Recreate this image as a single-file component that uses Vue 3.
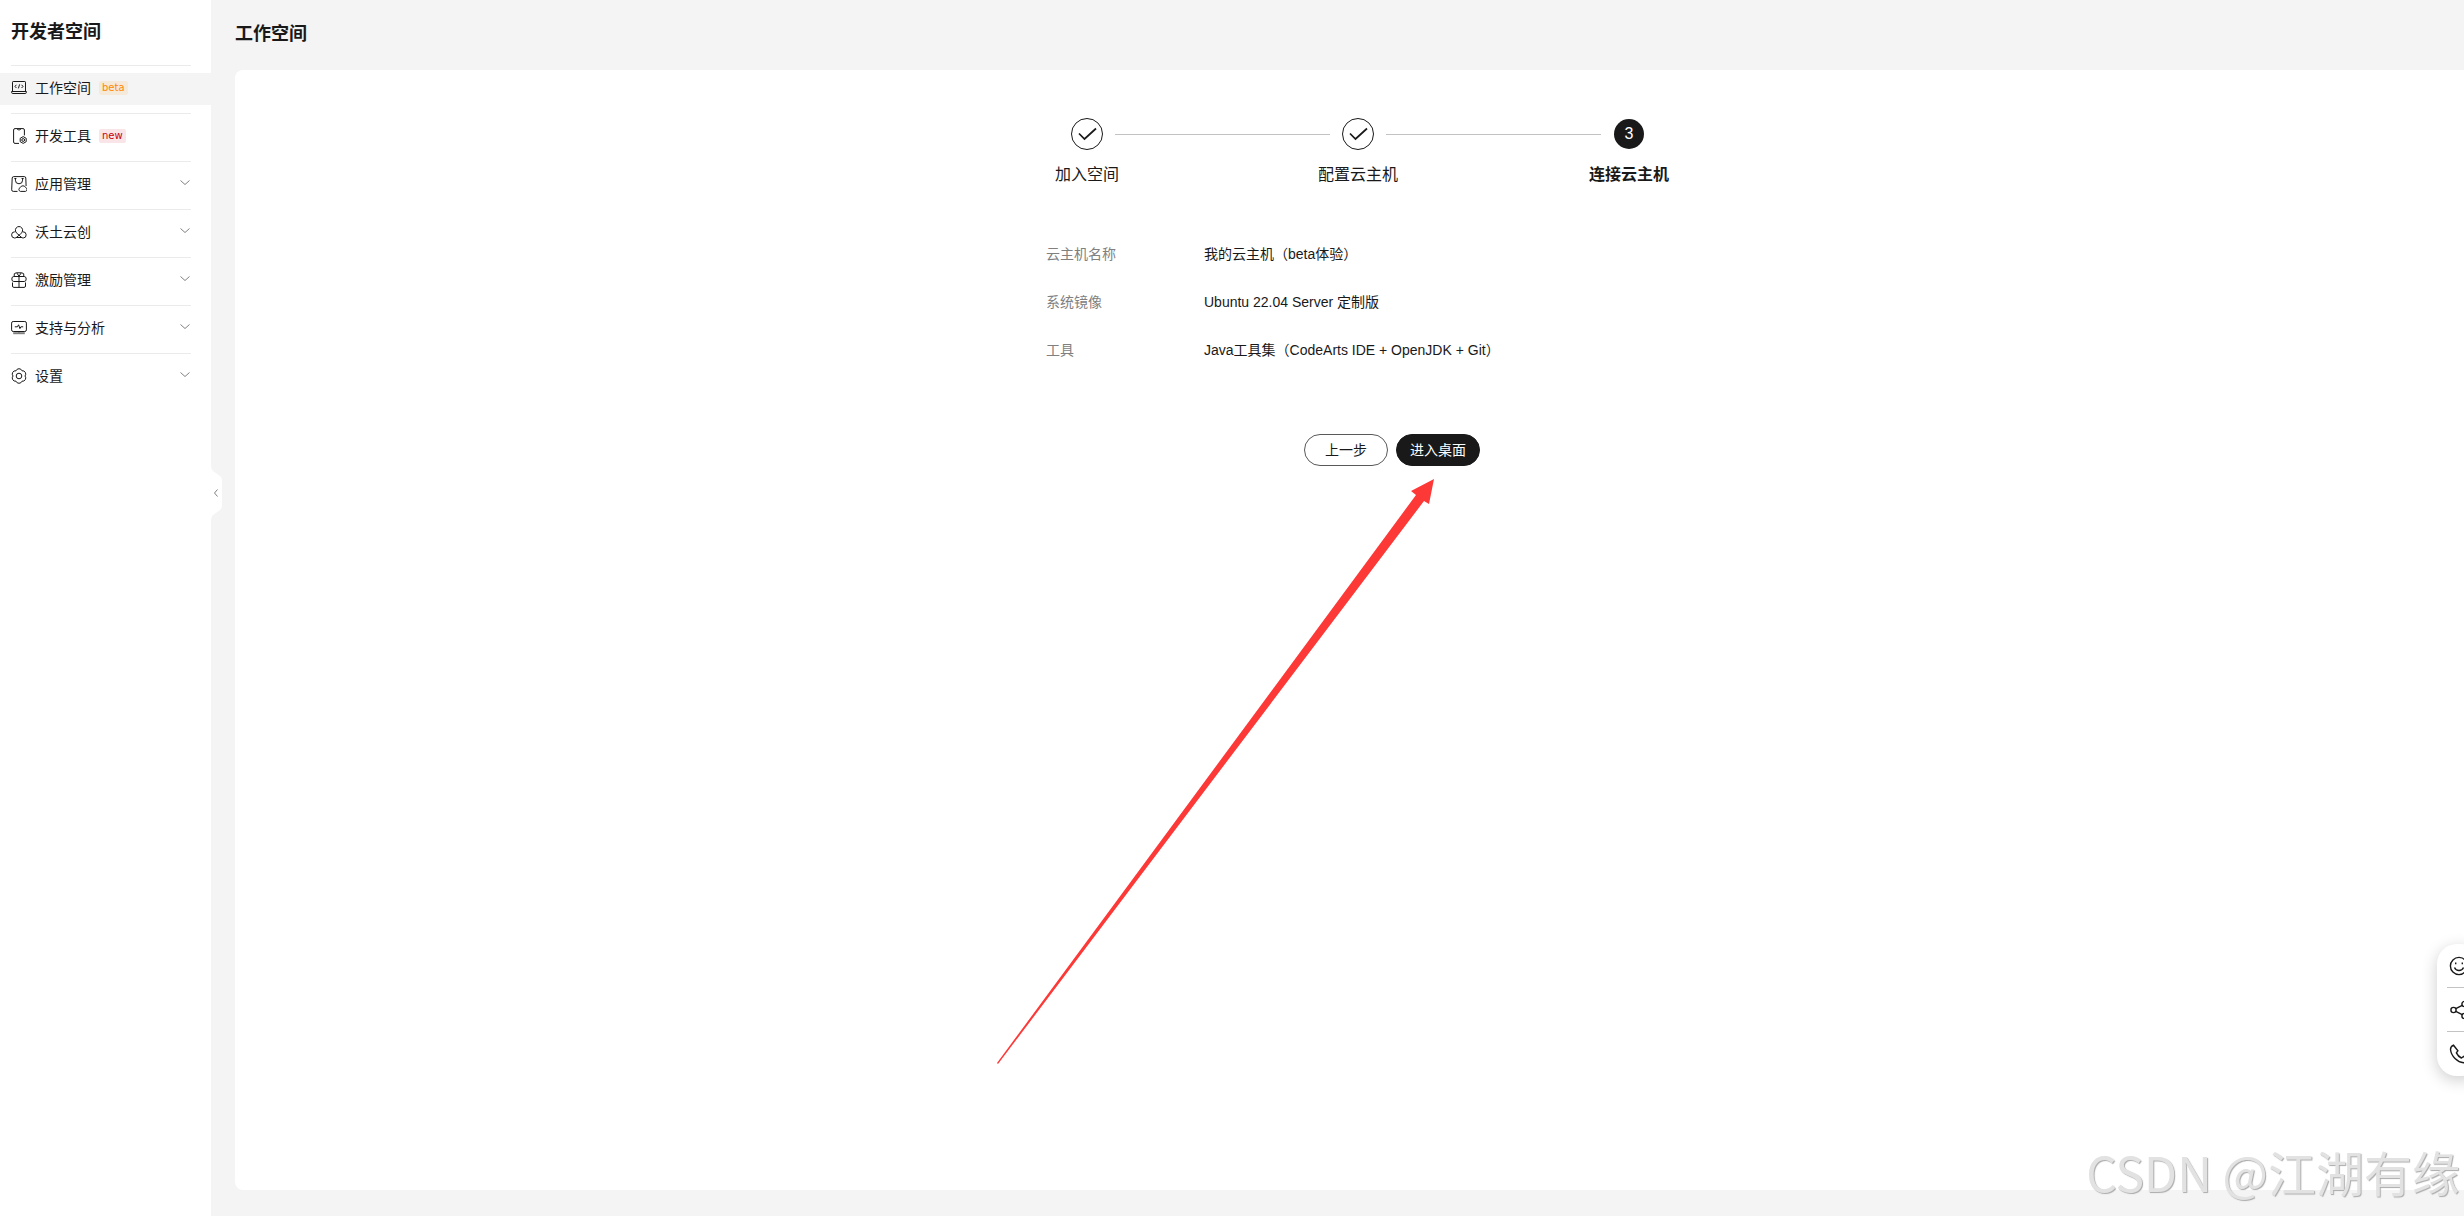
<!-- Developer workspace: cloud host setup, last step -->
<template>
  <div class="page">
    <aside class="sidebar">
      <h1 class="sidebar-title">开发者空间</h1>
      <nav class="menu">
        <div v-for="item in menus" :key="item.icon" class="menu-row">
          <a href="#" class="menu-item" :class="{ active: item.active }">
            <svg class="menu-icon" viewBox="0 0 16 16">
              <g v-if="item.icon === 'laptop'">
                <path d="M1.5 11V2.2q0-.7.7-.7h11.6q.7 0 .7.7V11" />
                <path d="M.6 11.5h14.8v.8q0 1.2-1.2 1.2H1.8q-1.2 0-1.2-1.2z" />
                <path d="M5.4 4.8 4 6.4 5.4 8M10.6 4.8 12 6.4 10.6 8M8.6 4.4 7.4 8.4" />
              </g>
              <g v-else-if="item.icon === 'tool'">
                <path d="M8 15.4H4q-1.4 0-1.4-1.4V2Q2.6.6 4 .6h8q1.4 0 1.4 1.4v5.4M6.4.8q0 1 .8 1h1.6q.8 0 .8-1" />
                <path d="m12.2 8.6 3 1.7v3.4l-3 1.7-3-1.7v-3.4z" />
                <circle cx="12.2" cy="12" r="1.4" />
              </g>
              <g v-else-if="item.icon === 'app'">
                <path d="M6.5 15.4H2.3Q.7 15.4.7 13.8L1.2 2Q1.3.6 2.7.6h10.6q1.4 0 1.5 1.4l.3 8M4.4 2.5v1.7a3.6 3.6 0 0 0 7.2 0V2.5M3.4 2.5h2M10.6 2.5h2" />
                <path d="M9.4 15.4a2 2 0 0 1-.2-3.8 3 3 0 0 1 5.5 0 2 2 0 0 1-.2 3.8z" />
              </g>
              <g v-else-if="item.icon === 'cloud'">
                <path d="M4.5 7a3.6 3.6 0 1 1 7 0q-.3 2-1.8 2.8L6 13q-1 1-2.4 1a3.1 3.1 0 1 1 .2-6.2M11.9 7.8a3.1 3.1 0 1 1 .3 6.2q-1.2 0-2.2-1L8 11.1M4.4 7Q5 9.3 8 11M5.2 13.5h5.6" />
              </g>
              <g v-else-if="item.icon === 'gift'">
                <path d="M2.8 4.5h10.4q2 0 2 2.5t-2 2.5H2.8q-2 0-2-2.5t2-2.5zM1.5 10.5V14q0 1.4 1.4 1.4h10.2q1.4 0 1.4-1.4v-3.5M8 4.5v11M3.2 4.5Q2.4.8 5.2.8h5.6q2.8 0 2 3.7M5.8 1 8 4.2 10.2 1" />
              </g>
              <g v-else-if="item.icon === 'monitor'">
                <rect x=".6" y="1.5" width="14.8" height="10" rx="1.6" />
                <path d="M3.8 6.8h2.6l1.2-2 1.3 3.8 1-1.8h2.3M8 11.6v2" />
                <path class="base" d="M2.2 13.2h11.6" />
              </g>
              <g v-else>
                <path d="M11 2.8a3.2 3.2 0 0 1 3 5.2 3.2 3.2 0 0 1-3 5.2 3.2 3.2 0 0 1-6 0A3.2 3.2 0 0 1 2 8a3.2 3.2 0 0 1 3-5.2 3.2 3.2 0 0 1 6 0z" />
                <circle cx="8" cy="8" r="2.8" />
              </g>
            </svg>
            <span>{{ item.label }}</span>
            <span v-if="item.tag" class="tag" :class="'tag-' + item.tag">{{ item.tag }}</span>
            <svg v-if="item.children" class="chevron" viewBox="0 0 10 6">
              <path d="m.5.5 4.5 4 4.5-4" />
            </svg>
          </a>
        </div>
      </nav>
      <button class="collapse" type="button" aria-label="收起">
        <svg viewBox="0 0 12 54">
          <path class="collapse-bg" d="M0 0q0 3 2 5l7 5q2 2 2 4v26q0 2-2 4l-7 5q-2 2-2 5z" />
          <path class="collapse-arrow" d="M6.5 23.5 3.5 27l3 3.5" />
        </svg>
      </button>
    </aside>

    <main class="main">
      <h2 class="main-title">工作空间</h2>
      <section class="card">
        <ol class="steps">
          <li v-for="(step, i) in steps" :key="step" class="step" :class="{ current: i === 2 }">
            <div class="step-head">
              <span class="step-line" :class="{ hidden: i === 0 }"></span>
              <span class="step-dot">
                <svg v-if="i < 2" viewBox="0 0 32 32">
                  <circle cx="16" cy="16" r="15.5" />
                  <path class="tick" d="m8 15.5 5.5 5.5L25 10.5" />
                </svg>
                <span v-else class="step-num">{{ i + 1 }}</span>
              </span>
              <span class="step-line" :class="{ hidden: i === 2 }"></span>
            </div>
            <div class="step-label">{{ step }}</div>
          </li>
        </ol>

        <div class="content">
          <dl class="info">
            <div v-for="row in info" :key="row.label" class="info-row">
              <dt>{{ row.label }}</dt>
              <dd>{{ row.value }}</dd>
            </div>
          </dl>
          <div class="actions">
            <button class="btn" type="button">上一步</button>
            <button class="btn primary" type="button">进入桌面</button>
          </div>
          <svg class="pointer" viewBox="0 0 440 586">
            <path d="M437 0 414 12 419 16 0 584 1 585 427 22 432 25z" />
          </svg>
        </div>
      </section>
    </main>

    <div class="float-bar">
      <button class="float-btn" type="button" aria-label="反馈">
        <svg viewBox="0 0 20 20">
          <circle cx="10" cy="10" r="8.6" />
          <path d="M6.7 6.6v1.6M13.3 6.6v1.6M5.5 11.5q1.2 3 4.5 3t4.5-3" />
        </svg>
      </button>
      <button class="float-btn" type="button" aria-label="分享">
        <svg viewBox="0 0 20 20">
          <circle cx="4.5" cy="10" r="2.6" />
          <circle cx="15.5" cy="4" r="2.6" />
          <circle cx="15.5" cy="16" r="2.6" />
          <path d="m6.8 8.7 6.4-3.4M6.8 11.3l6.4 3.4" />
        </svg>
      </button>
      <button class="float-btn" type="button" aria-label="电话">
        <svg viewBox="0 0 20 20">
          <path d="M4.5 1.2q-3 1.3-3 4.3.5 5 4.5 9t8.5 4.3q3 0 4.2-3l-4-3.4-2.3 1.6q-3.3-1.5-5-5.1l1.5-2.2z" />
        </svg>
      </button>
    </div>

    <div class="watermark">CSDN @江湖有缘</div>
  </div>
</template>

<script setup>
const menus = [
  { icon: 'laptop', label: '工作空间', tag: 'beta', active: true },
  { icon: 'tool', label: '开发工具', tag: 'new' },
  { icon: 'app', label: '应用管理', children: true },
  { icon: 'cloud', label: '沃土云创', children: true },
  { icon: 'gift', label: '激励管理', children: true },
  { icon: 'monitor', label: '支持与分析', children: true },
  { icon: 'setting', label: '设置', children: true }
]

const steps = ['加入空间', '配置云主机', '连接云主机']

const info = [
  { label: '云主机名称', value: '我的云主机（beta体验）' },
  { label: '系统镜像', value: 'Ubuntu 22.04 Server 定制版' },
  { label: '工具', value: 'Java工具集（CodeArts IDE + OpenJDK + Git）' }
]
</script>

<style>
body {
  overflow: hidden;
}
</style>

<style scoped>
/* 页面比窗口宽出一个滚动条 */
.page {
  display: flex;
  width: calc(100% + 17px);
  min-height: 100vh;
  background: #f4f4f4;
  color: #191919;
  font-family: "Liberation Sans", "Noto Sans CJK SC", sans-serif;
  font-size: 14px;
  line-height: 20px;
}

.page * {
  box-sizing: border-box;
}

button {
  font: inherit;
  color: inherit;
  cursor: pointer;
}

svg {
  display: block;
  fill: none;
  stroke: currentColor;
}

/* 侧边栏 */
.sidebar {
  position: relative;
  flex: none;
  width: 211px;
  background: #fff;
}

.sidebar-title,
.main-title {
  margin: 0;
  font-size: 18px;
  line-height: 24px;
  font-weight: 700;
}

.sidebar-title {
  padding: 20px 11px 21px;
}

.menu-row {
  padding-bottom: 8px;
}

.menu-row::before {
  content: "";
  display: block;
  height: 1px;
  margin: 0 20px 7px 11px;
  background: #ebebeb;
}

.menu-item {
  display: flex;
  align-items: center;
  gap: 8px;
  height: 32px;
  padding: 0 20px 2px 11px;
  color: inherit;
  text-decoration: none;
}

.menu-item.active {
  background: #f4f4f4;
}

.menu-icon {
  width: 16px;
  height: 16px;
}

.menu-icon .base {
  stroke: #808080;
  stroke-width: 2;
}

.chevron {
  width: 10px;
  height: 6px;
  margin: 0 1px 2px auto;
  color: #808080;
}

.tag {
  height: 14px;
  padding: 0 3px;
  border-radius: 2px;
  font-family: "DejaVu Sans", sans-serif;
  font-size: 10px;
  line-height: 14px;
}

.tag-beta {
  background: #f5e9da;
  color: #ff8800;
}

.tag-new {
  background: #f9e5e7;
  color: #c7000b;
}

.collapse {
  position: absolute;
  top: 466px;
  left: 100%;
  width: 12px;
  height: 54px;
  padding: 0;
  border: 0;
  background: none;
}

.collapse-bg {
  fill: #fff;
  stroke: none;
}

.collapse-arrow {
  stroke: #808080;
}

/* 主区域 */
.main {
  display: flex;
  flex-direction: column;
  flex: 1;
  padding: 22px 0 26px 24px;
}

.card {
  flex: 1;
  margin-top: 24px;
  padding-top: 48px;
  border-radius: 8px;
  background: #fff;
}

.steps {
  display: flex;
  width: 813px;
  margin: 0 auto;
  padding: 0;
  list-style: none;
}

.step {
  flex: 1;
  text-align: center;
  font-size: 16px;
}

.step-head {
  display: flex;
  align-items: center;
  gap: 12px;
  height: 32px;
}

.step-line {
  flex: 1;
  height: 1px;
  background: #c3c3c3;
}

.step-line.hidden {
  visibility: hidden;
}

.step-dot {
  width: 32px;
  height: 32px;
}

.tick {
  stroke-width: 1.7;
}

.step-num {
  display: block;
  width: 30px;
  height: 30px;
  margin: 1px;
  border-radius: 50%;
  background: #191919;
  color: #fff;
  line-height: 30px;
}

.step-label {
  margin-top: 13px;
  line-height: 24px;
}

.current .step-label {
  font-weight: 700;
}

/* 主机信息 */
.content {
  position: relative;
  width: 624px;
  margin: 57px auto 0;
}

.info {
  display: flex;
  flex-direction: column;
  gap: 28px;
  margin: 0;
}

.info-row {
  display: flex;
}

.info dt {
  width: 158px;
  color: #808080;
}

.info dd {
  margin: 0;
}

.actions {
  display: flex;
  justify-content: center;
  gap: 8px;
  margin-top: 74px;
  padding-left: 68px;
}

.btn {
  width: 84px;
  height: 32px;
  padding: 0;
  border: 1px solid #595959;
  border-radius: 16px;
  background: #fff;
}

.btn.primary {
  border-color: #191919;
  background: #191919;
  color: #fff;
}

.pointer {
  position: absolute;
  top: 235px;
  left: -49px;
  width: 440px;
  height: 586px;
  fill: #fd3938;
  stroke: none;
  pointer-events: none;
}

/* 右侧悬浮条 */
.float-bar {
  position: fixed;
  right: -17px;
  bottom: 140px;
  width: 44px;
  padding: 0 10px;
  border-radius: 20px;
  background: #fff;
  box-shadow: 0 4px 16px rgba(0, 0, 0, 0.2);
}

.float-btn {
  display: flex;
  align-items: center;
  justify-content: center;
  width: 24px;
  height: 44px;
  padding: 0;
  border: 0;
  background: none;
}

.float-btn:not(:last-child) {
  border-bottom: 1px solid #c3c3c3;
}

.float-btn svg {
  flex: none;
  width: 20px;
  height: 20px;
  stroke-width: 1.4;
}

.watermark {
  position: fixed;
  right: 4px;
  bottom: 13px;
  color: #e2e2e2;
  font-family: "Noto Sans CJK SC", sans-serif;
  font-size: 48px;
  font-weight: 400;
  line-height: 64px;
  text-shadow: 1px 1px 1px #aaa;
}
</style>
